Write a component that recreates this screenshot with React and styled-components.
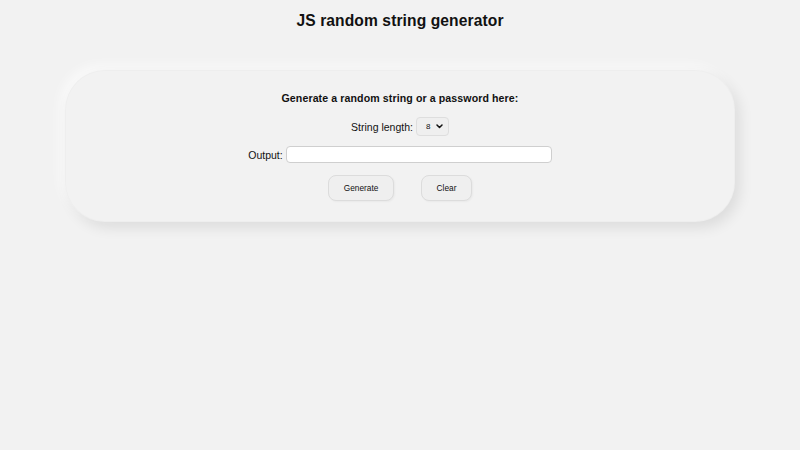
import React from "react";
import styled, { createGlobalStyle } from "styled-components";

const Global = createGlobalStyle`
  html, body { margin: 0; padding: 0; background: #f2f2f2; }
  body { font-family: "Liberation Sans", Arial, sans-serif; color: #111; }
`;

const Page = styled.div`
  width: 800px;
  height: 450px;
  display: flex;
  flex-direction: column;
  align-items: center;
`;

const Title = styled.h1`
  margin: 12px 0 0;
  font-size: 15.6px;
  line-height: 18px;
  font-weight: 700;
  letter-spacing: 0.1px;
`;

const Card = styled.div`
  margin-top: 40px;
  width: 670px;
  height: 152px;
  box-sizing: border-box;
  border-radius: 40px;
  background: #f2f2f2;
  box-shadow: 5px 6px 14px rgba(0,0,0,0.09), -5px -5px 12px rgba(255,255,255,0.6), inset 0 0 0 1px rgba(0,0,0,0.015);
  display: flex;
  flex-direction: column;
  align-items: center;
  padding-top: 21px;
`;

const Subtitle = styled.h2`
  margin: 0;
  font-size: 10.6px;
  line-height: 14px;
  font-weight: 700;
  letter-spacing: 0.1px;
`;

const Row = styled.div`
  display: flex;
  align-items: center;
  gap: 3px;
  margin-top: ${p => p.$mt}px;
  font-size: 10.5px;
  line-height: 14px;
`;

const SelectWrap = styled.div`
  position: relative;
  display: flex;
`;

const Select = styled.select`
  appearance: none;
  -webkit-appearance: none;
  font-family: "Liberation Sans", Arial, sans-serif;
  font-size: 8px;
  height: 19px;
  width: 33px;
  padding: 0 0 0 9px;
  border: 1px solid #dedede;
  border-radius: 4px;
  background: #efefef;
  color: #111;
  outline: none;
`;

const Chevron = styled.svg`
  position: absolute;
  right: 6px;
  top: 7px;
  width: 7px;
  height: 5px;
  pointer-events: none;
`;

const Input = styled.input`
  width: 266px;
  height: 17px;
  box-sizing: border-box;
  border: 1px solid #cfcfcf;
  border-radius: 4px;
  background: #fff;
  padding: 0 4px;
`;

const Buttons = styled.div`
  display: flex;
  gap: 27px;
  margin-top: 12px;
`;

const Button = styled.button`
  width: ${p => p.$w}px;
  height: 26px;
  font-family: "Liberation Sans", Arial, sans-serif;
  font-size: 8.3px;
  color: #111;
  background: #efefef;
  border: 1px solid #dcdcdc;
  border-radius: 8px;
  box-shadow: 1px 1px 2px rgba(0,0,0,0.04);
`;

export default function App() {
  return (
    <Page>
      <Global />
      <Title>JS random string generator</Title>
      <Card>
        <Subtitle>Generate a random string or a password here:</Subtitle>
        <Row $mt={12}>
          <span>String length:</span>
          <SelectWrap>
            <Select defaultValue="8">
              {[4,5,6,7,8,9,10,12,16,20,32].map(n => <option key={n} value={n}>{n}</option>)}
            </Select>
            <Chevron viewBox="0 0 7 5">
              <path d="M1 1 L3.5 3.5 L6 1" fill="none" stroke="#111" strokeWidth="1.5" strokeLinecap="round" strokeLinejoin="round" />
            </Chevron>
          </SelectWrap>
        </Row>
        <Row $mt={10}>
          <span>Output:</span>
          <Input type="text" />
        </Row>
        <Buttons>
          <Button $w={66}>Generate</Button>
          <Button $w={51}>Clear</Button>
        </Buttons>
      </Card>
    </Page>
  );
}
